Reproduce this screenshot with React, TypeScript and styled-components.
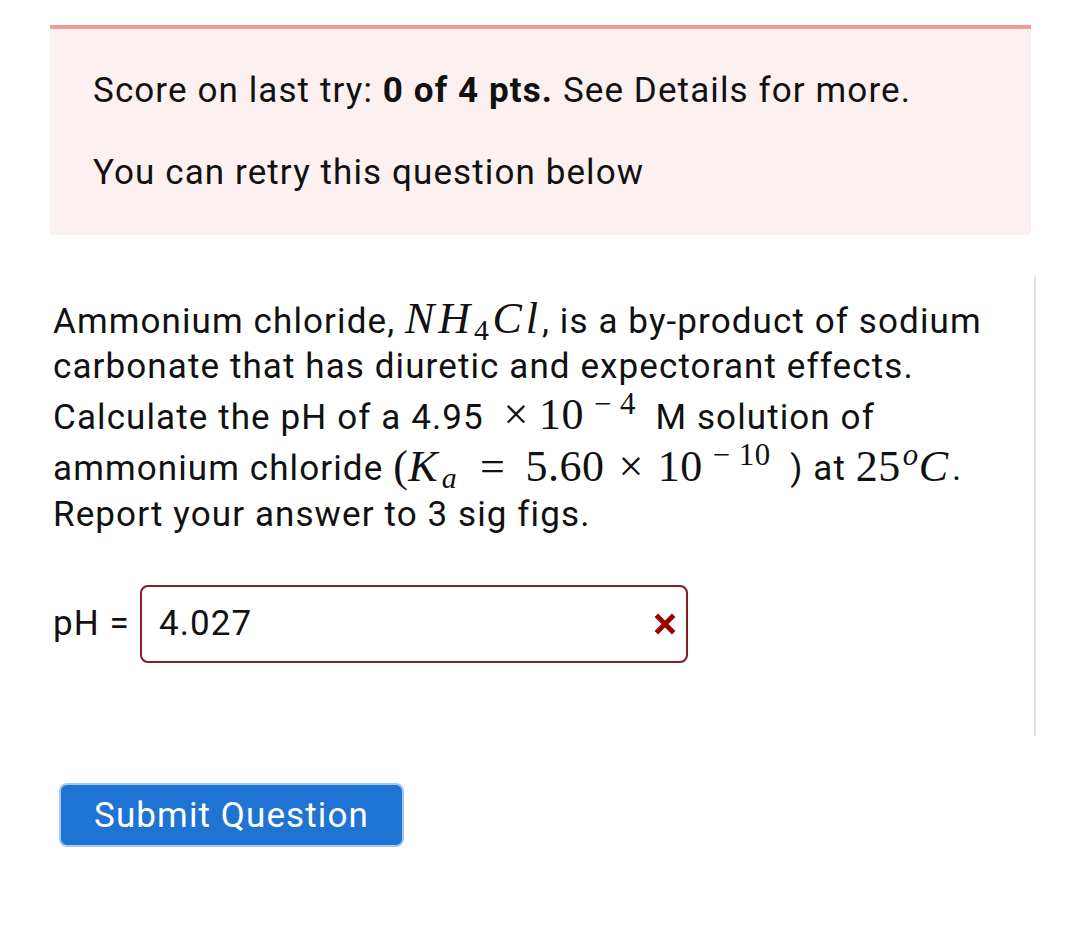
import styled, { createGlobalStyle } from 'styled-components';

const GlobalStyle = createGlobalStyle`
  body {
    margin: 0;
    background: #ffffff;
    font-family: Roboto, "Liberation Sans", Arial, sans-serif;
    color: #111111;
    letter-spacing: 1.1px;
  }
`;

const Page = styled.div`
  width: 1080px;
  height: 928px;
  padding: 25px 0 0 50px;
  box-sizing: border-box;
  overflow: hidden;
`;

const Banner = styled.div`
  width: 981px;
  height: 210px;
  box-sizing: border-box;
  background: #fdf0f0;
  border-top: 4px solid #ee9d9d;
  padding: 40px 0 0 43px;
  font-size: 35px;
  line-height: 44px;
`;

const BannerLine = styled.p`
  margin: 0 0 38px;
`;

const QuestionArea = styled.div`
  width: 986px;
  margin-top: 41px;
  border-right: 2px solid #e2e2e2;
  height: 460px;
  box-sizing: border-box;
  padding: 20px 0 0 3px;
`;

const Text = styled.p`
  margin: 0;
  font-size: 35px;
  line-height: 45px;
`;

const Math = styled.span`
  font-family: "Liberation Serif", "Times New Roman", serif;
  font-size: 44px;
  letter-spacing: 0.5px;
`;

const MathI = styled.i`
  font-family: "Liberation Serif", "Times New Roman", serif;
  font-style: italic;
  letter-spacing: 4px;
`;

const Sub = styled.span`
  font-size: 0.68em;
  vertical-align: -0.25em;
  line-height: 0;
  margin-right: 3px;
  font-style: ${(p: { $italic?: boolean }) => (p.$italic ? 'italic' : 'normal')};
`;

const Sup = styled.span`
  font-size: 0.7em;
  vertical-align: 0.5em;
  line-height: 1;
  margin-left: ${(p: { $gap?: number }) => p.$gap ?? 8}px;
  font-style: ${(p: { $italic?: boolean; $gap?: number }) => (p.$italic ? 'italic' : 'normal')};
`;

const Op = styled.span`
  margin: 0 ${(p: { $gap?: number }) => p.$gap ?? 14}px;
`;

const AnswerRow = styled.div`
  display: flex;
  align-items: center;
  margin-top: 48px;
  font-size: 35px;
`;

const Label = styled.span`
  margin-right: 10px;
`;

const InputBox = styled.div`
  width: 548px;
  height: 78px;
  box-sizing: border-box;
  border: 2px solid #7e1e1e;
  border-radius: 8px;
  display: flex;
  align-items: center;
  justify-content: space-between;
  padding: 0 8px 0 17px;
`;

const Cross = styled.svg`
  width: 26px;
  height: 26px;
`;

const SubmitButton = styled.button`
  margin: 47px 0 0 9px;
  width: 345px;
  height: 64px;
  box-sizing: border-box;
  background: #1f73d3;
  border: 2px solid #a5c8ef;
  border-radius: 8px;
  color: #ffffff;
  font-family: Roboto, "Liberation Sans", Arial, sans-serif;
  font-size: 35px;
  letter-spacing: 1.1px;
  padding: 0;
`;

export default function App(): JSX.Element {
  return (
    <Page>
      <GlobalStyle />
      <Banner>
        <BannerLine>
          Score on last try: <b>0 of 4 pts.</b> See Details for more.
        </BannerLine>
        <BannerLine>You can retry this question below</BannerLine>
      </Banner>
      <QuestionArea>
        <Text>
          Ammonium chloride,{' '}
          <Math>
            <MathI>NH</MathI>
            <Sub>4</Sub>
            <MathI>Cl</MathI>
          </Math>
          , is a by-product of sodium
          <br />
          carbonate that has diuretic and expectorant effects.
          <br />
          Calculate the pH of a 4.95 <Math>
            <Op $gap={10}>×</Op>10<Sup $gap={10}>−&nbsp;4</Sup>
          </Math>{' '}
          &nbsp;M solution of
          <br />
          ammonium chloride{' '}
          <Math>
            (<MathI>K</MathI>
            <Sub $italic>a</Sub>
            <Op $gap={20}>=</Op>5.60<Op $gap={14}>×</Op>10<Sup $gap={10}>−&nbsp;10</Sup>
          </Math>
          &nbsp;&nbsp;) at{' '}
          <Math>
            25<Sup $italic $gap={2}>o</Sup>
            <MathI>C</MathI>
          </Math>
          .
          <br />
          Report your answer to 3 sig figs.
        </Text>
        <AnswerRow>
          <Label>pH =</Label>
          <InputBox>
            <span>4.027</span>
            <Cross viewBox="0 0 24 24">
              <path d="M4 4 L20 20 M20 4 L4 20" stroke="#990000" strokeWidth="4.5" />
            </Cross>
          </InputBox>
        </AnswerRow>
      </QuestionArea>
      <SubmitButton>Submit Question</SubmitButton>
    </Page>
  );
}
